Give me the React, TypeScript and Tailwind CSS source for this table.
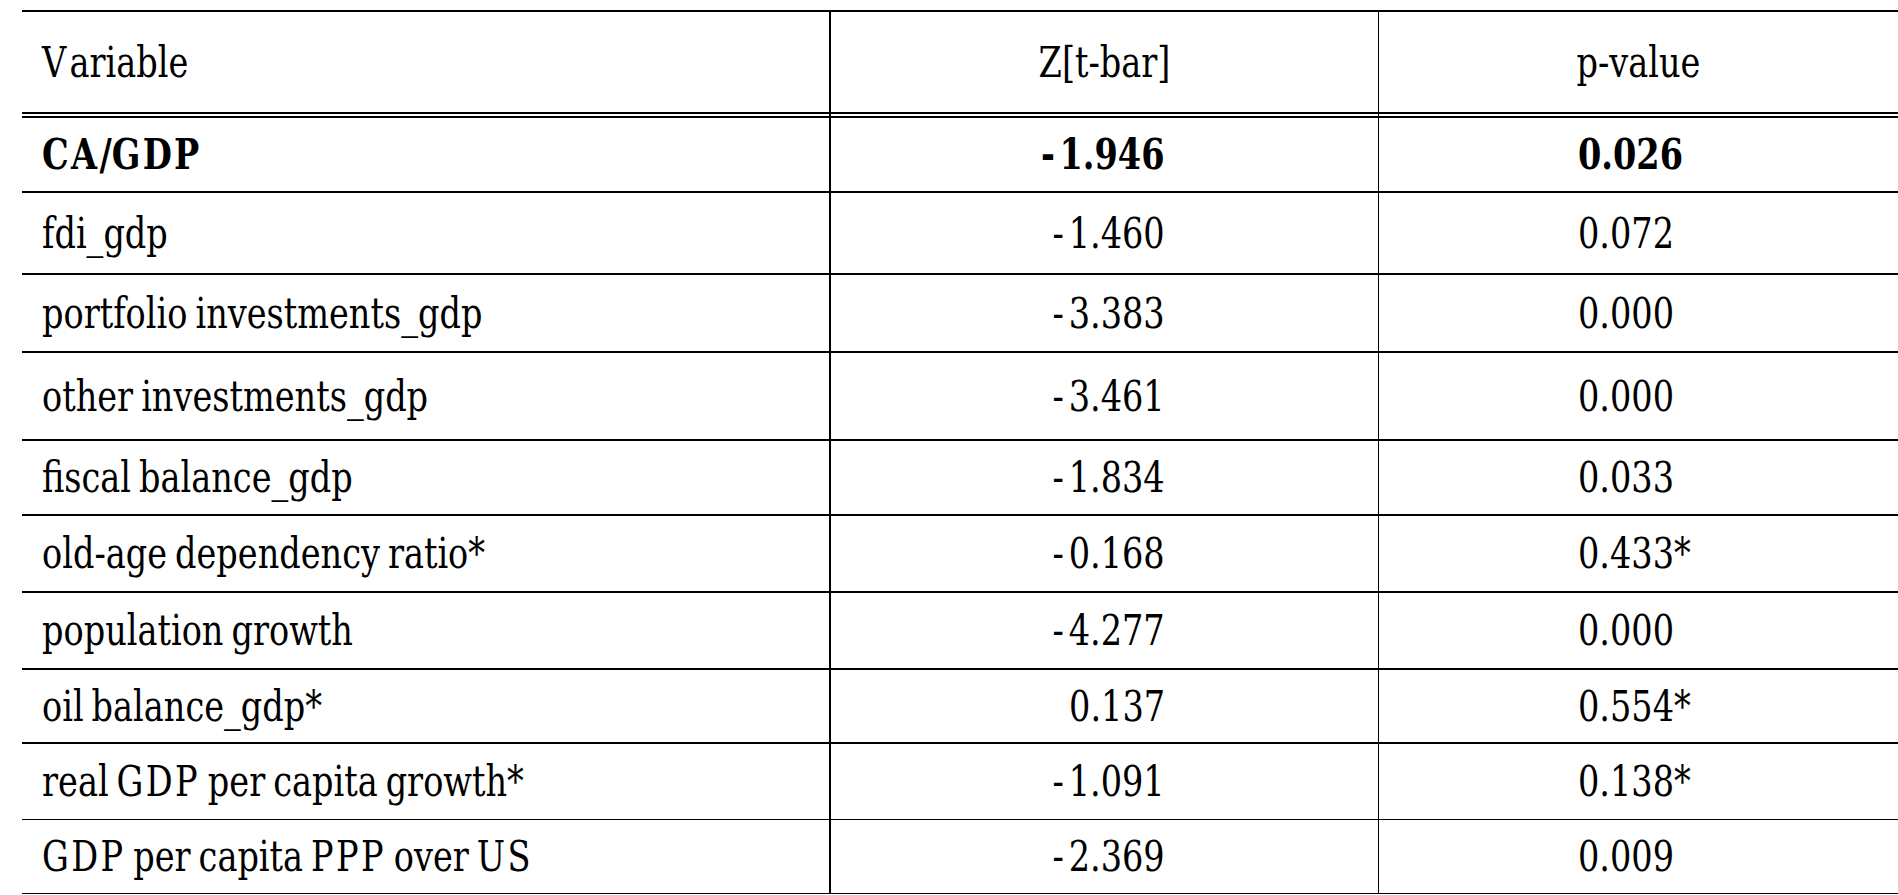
import React from "react";

type Row = {
  name: React.ReactNode;
  z: React.ReactNode;
  p: string;
  h: string;
  line: string;
  bold?: boolean;
};

const G = ({ t }: { t: string }) => <span className="tracking-[0.07em]">{t}</span>;
const Neg = ({ v }: { v: string }) => (
  <>
    <span className="tracking-[0.14em]">-</span>
    {v}
  </>
);

const rows: Row[] = [
  { name: <><G t="CA" />/<G t="GDP" /></>, z: <Neg v="1.946" />, p: "0.026", h: "h-[77px]", line: "border-t-2 border-b-2", bold: true },
  { name: "fdi_gdp", z: <Neg v="1.460" />, p: "0.072", h: "h-[82px]", line: "border-b-2" },
  { name: "portfolio investments_gdp", z: <Neg v="3.383" />, p: "0.000", h: "h-[78px]", line: "border-b-2" },
  { name: "other investments_gdp", z: <Neg v="3.461" />, p: "0.000", h: "h-[88px]", line: "border-b-2" },
  { name: "fiscal balance_gdp", z: <Neg v="1.834" />, p: "0.033", h: "h-[75px]", line: "border-b-2" },
  { name: "old-age dependency ratio*", z: <Neg v="0.168" />, p: "0.433*", h: "h-[77px]", line: "border-b-2" },
  { name: "population growth", z: <Neg v="4.277" />, p: "0.000", h: "h-[77px]", line: "border-b-2" },
  { name: "oil balance_gdp*", z: "0.137", p: "0.554*", h: "h-[74px]", line: "border-b-2" },
  { name: <>real <G t="GDP" /> per capita growth*</>, z: <Neg v="1.091" />, p: "0.138*", h: "h-[76px]", line: "border-b" },
  { name: <><G t="GDP" /> per capita <G t="PPP" /> over <G t="US" /></>, z: <Neg v="2.369" />, p: "0.009", h: "h-[74px]", line: "border-b" },
];

export default function App() {
  return (
    <div className="w-[1898px] h-[895px] overflow-hidden bg-white pt-[10px] pl-[22px] font-['DejaVu_Serif',serif] text-[43px] leading-none text-black">
      <div className="border-t-2 border-black">
        {/* header */}
        <div className="grid grid-cols-[807px_549px_520px] h-[102px] border-b-2 border-black">
          <div className="flex items-center pl-[20px]">
            <span className="inline-block origin-left scale-x-[0.78] whitespace-nowrap">
              <span className="tracking-[0.1em]">V</span>ariable
            </span>
          </div>
          <div className="flex items-center justify-center border-l-2 border-black">
            <span className="inline-block origin-center scale-x-[0.78] whitespace-nowrap">Z[t-bar]</span>
          </div>
          <div className="flex items-center justify-center border-l border-black">
            <span className="inline-block origin-center scale-x-[0.78] whitespace-nowrap">p-value</span>
          </div>
        </div>
        {/* gap of double line */}
        <div className="grid grid-cols-[807px_549px_520px] h-[2px]">
          <div />
          <div className="border-l-2 border-black" />
          <div className="border-l border-black" />
        </div>
        {rows.map((r, i) => (
          <div
            key={i}
            className={`grid grid-cols-[807px_549px_520px] ${r.h} ${r.line} border-black ${r.bold ? "font-bold" : ""}`}
          >
            <div className="flex items-center pl-[20px]">
              <span className="inline-block origin-left scale-x-[0.78] whitespace-nowrap [word-spacing:-0.08em]">{r.name}</span>
            </div>
            <div className="flex items-center justify-end pr-[213px] border-l-2 border-black">
              <span className="inline-block origin-right scale-x-[0.78] whitespace-nowrap">{r.z}</span>
            </div>
            <div className="flex items-center pl-[199px] border-l border-black">
              <span className="inline-block origin-left scale-x-[0.78] whitespace-nowrap">{r.p}</span>
            </div>
          </div>
        ))}
      </div>
    </div>
  );
}
